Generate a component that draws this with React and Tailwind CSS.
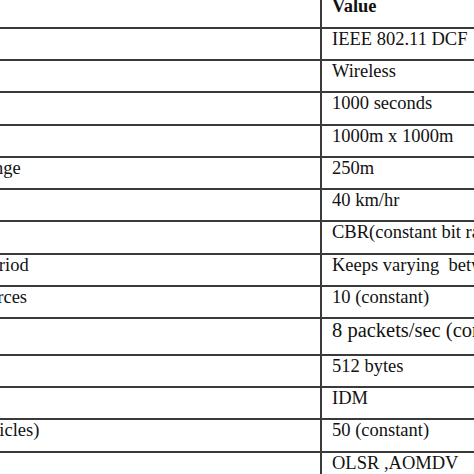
const rows = [
  ["MAC Protocol", "IEEE 802.11 DCF"],
  ["Channel Type", "Wireless"],
  ["Simulation time", "1000 seconds"],
  ["Topology Area", "1000m x 1000m"],
  ["Transmission range", "250m"],
  ["Vehicle Speed", "40 km/hr"],
  ["Traffic Type", "CBR(constant bit rate)"],
  ["Pause   Time  Period", "Keeps varying  between 0 to 10 seconds"],
  ["Numbers of Sources", "10 (constant)"],
  ["Packet Rate", "8 packets/sec (constant)", true],
  ["Data Packet size", "512 bytes"],
  ["Mobility Model", "IDM"],
  ["Node count (vehicles)", "50 (constant)"],
  ["Route protocol", "OLSR ,AOMDV"],
];

function Row({ label, value, big, head }) {
  const text = big ? "text-[20.5px] leading-[22px]" : "text-[18.5px] leading-[20px]";
  return (
    <div className={`grid grid-cols-[456px_1fr] border-b-2 border-[#3a3a3a] ${big ? "h-[36.3px]" : "h-[32.3px]"}`}>
      <div className={`border-r-2 border-[#3a3a3a] pl-[10px] whitespace-pre ${text} ${head ? "font-bold" : ""}`}>
        {label}
      </div>
      <div className={`pl-[10px] whitespace-pre ${text} ${head ? "font-bold" : ""}`}>
        {value}
      </div>
    </div>
  );
}

export default function App() {
  return (
    <div className="w-[474px] h-[474px] overflow-hidden bg-white text-[#111]" style={{ fontFamily: '"Liberation Serif", "Times New Roman", serif' }}>
      <div className="ml-[-134px] mt-[-3.6px] w-[700px]">
        <Row label="Parameter" value="Value" head />
        {rows.map(([label, value, big]) => (
          <Row key={label} label={label} value={value} big={big} />
        ))}
      </div>
    </div>
  );
}
